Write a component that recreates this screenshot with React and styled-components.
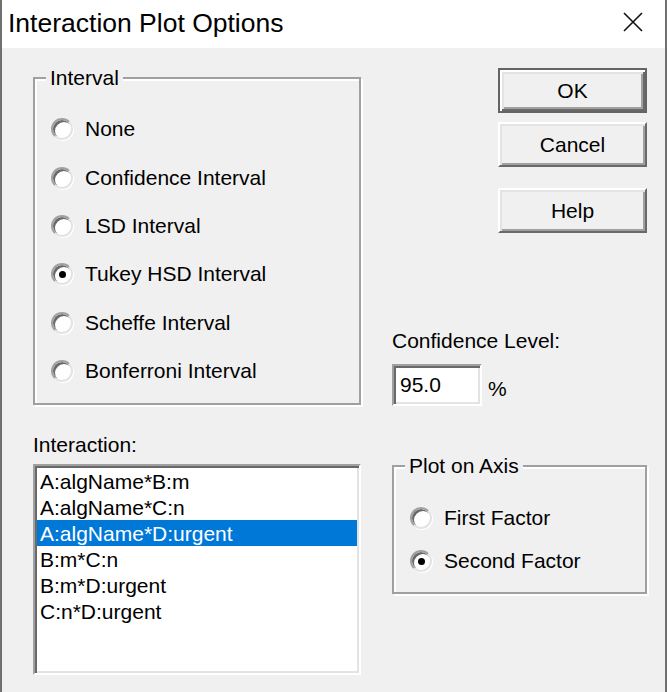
import React from "react";
import styled, { createGlobalStyle } from "styled-components";

const GlobalStyle = createGlobalStyle`
  html, body {
    margin: 0;
    padding: 0;
    background: #f0f0f0;
  }
  body {
    font-family: "Liberation Sans", Arial, sans-serif;
    color: #000;
  }
`;

const Window = styled.div`
  width: 667px;
  height: 692px;
  box-sizing: border-box;
  border-left: 2px solid #707070;
  border-right: 2px solid #707070;
  background: #f0f0f0;
  display: flex;
  flex-direction: column;
  overflow: hidden;
`;

const TitleBar = styled.div`
  height: 48px;
  flex: none;
  background: #fff;
  display: flex;
  align-items: center;
  justify-content: space-between;
  padding: 0 22px 2px 6px;
  box-sizing: border-box;
`;

const Title = styled.div`
  font-size: 26.5px;
  line-height: 30px;
  color: #000;
`;

const CloseIcon = styled.svg`
  width: 20px;
  height: 20px;
  margin-bottom: 2px;
`;

const Body = styled.div`
  display: flex;
  gap: 31px;
  padding: 0 18px 0 31px;
  flex: 1;
`;

const LeftColumn = styled.div`
  width: 328px;
  padding-top: 29px;
  display: flex;
  flex-direction: column;
`;

const RightColumn = styled.div`
  flex: 1;
  padding-top: 20px;
  display: flex;
  flex-direction: column;
`;

const GroupBox = styled.div`
  position: relative;
  box-sizing: border-box;
  height: ${(p) => p.$height}px;
  margin-top: ${(p) => p.$top || 0}px;
  border: 2px solid #a0a0a0;
  box-shadow: 2px 2px 0 #fff, inset 2px 2px 0 #fff;
  padding: ${(p) => p.$padTop}px 0 0 16px;
`;

const Legend = styled.span`
  position: absolute;
  top: -13px;
  left: 11px;
  padding: 0 4px;
  background: #f0f0f0;
  font-size: 21px;
  line-height: 24px;
`;

const RadioRow = styled.label`
  display: flex;
  align-items: center;
  gap: 12px;
  height: ${(p) => p.$h}px;
  font-size: 21px;
  line-height: 24px;
`;

const RadioCircle = styled.span`
  position: relative;
  width: 22px;
  height: 22px;
  box-sizing: border-box;
  border-radius: 50%;
  border: 2px solid;
  border-color: #a0a0a0 #e3e3e3 #e3e3e3 #a0a0a0;
  background: #fff;
  box-shadow: inset 2px 2px 0 #696969, 1px 1px 0 #fff;
  flex: none;

  &::after {
    content: "";
    display: ${(p) => (p.$checked ? "block" : "none")};
    position: absolute;
    left: 50%;
    top: 50%;
    width: 7px;
    height: 7px;
    margin: -3px 0 0 -3px;
    border-radius: 50%;
    background: #000;
  }
`;

const FieldLabel = styled.div`
  font-size: 21px;
  line-height: 24px;
  margin-top: ${(p) => p.$top}px;
`;

const ListBox = styled.div`
  margin-top: 7px;
  height: 211px;
  box-sizing: border-box;
  border: 2px solid;
  border-color: #a0a0a0 #fff #fff #a0a0a0;
  box-shadow: inset 2px 2px 0 #696969, inset -2px -2px 0 #e3e3e3;
  background: #fff;
  padding: 2px;
`;

const ListItem = styled.div`
  height: 26px;
  line-height: 26px;
  font-size: 21px;
  padding: 1px 0 0 3px;
  box-sizing: border-box;
  white-space: nowrap;
  background: ${(p) => (p.$selected ? "#0078d7" : "transparent")};
  color: ${(p) => (p.$selected ? "#fff" : "#000")};
`;

const ButtonStack = styled.div`
  align-self: flex-end;
  width: 149px;
  display: flex;
  flex-direction: column;
`;

const Button = styled.button`
  height: 45px;
  width: 100%;
  margin-top: ${(p) => p.$top || 0}px;
  box-sizing: border-box;
  background: #f0f0f0;
  font-family: "Liberation Sans", Arial, sans-serif;
  font-size: 21px;
  color: #000;
  padding: 0;
  border: 2px solid;
  border-color: ${(p) =>
    p.$default ? "#646464" : "#fff #696969 #696969 #fff"};
  box-shadow: ${(p) =>
    p.$default
      ? "inset 2px 2px 0 #fff, inset -2px -2px 0 #696969, inset 4px 4px 0 #e3e3e3, inset -4px -4px 0 #a0a0a0"
      : "inset 2px 2px 0 #e3e3e3, inset -2px -2px 0 #a0a0a0"};
`;

const InputRow = styled.div`
  display: flex;
  align-items: center;
  gap: 6px;
  margin-top: 11px;
`;

const TextInput = styled.div`
  width: 90px;
  height: 42px;
  box-sizing: border-box;
  border: 2px solid;
  border-color: #a0a0a0 #fff #fff #a0a0a0;
  box-shadow: inset 2px 2px 0 #696969, inset -2px -2px 0 #e3e3e3;
  background: #fff;
  font-size: 21px;
  line-height: 24px;
  padding: 7px 0 0 6px;
`;

const Unit = styled.span`
  font-size: 21px;
  line-height: 24px;
  padding-top: 8px;
`;

const intervals = [
  "None",
  "Confidence Interval",
  "LSD Interval",
  "Tukey HSD Interval",
  "Scheffe Interval",
  "Bonferroni Interval",
];

const interactions = [
  "A:algName*B:m",
  "A:algName*C:n",
  "A:algName*D:urgent",
  "B:m*C:n",
  "B:m*D:urgent",
  "C:n*D:urgent",
];

function Radio({ label, checked, h }) {
  return (
    <RadioRow $h={h}>
      <RadioCircle $checked={checked} />
      {label}
    </RadioRow>
  );
}

export default function App() {
  return (
    <>
      <GlobalStyle />
      <Window>
        <TitleBar>
          <Title>Interaction Plot Options</Title>
          <CloseIcon viewBox="0 0 20 20">
            <path d="M1 1 L19 19 M19 1 L1 19" stroke="#111" strokeWidth="1.6" fill="none" />
          </CloseIcon>
        </TitleBar>
        <Body>
          <LeftColumn>
            <GroupBox $height={328} $padTop={26}>
              <Legend>Interval</Legend>
              {intervals.map((name) => (
                <Radio key={name} label={name} h={48.4} checked={name === "Tukey HSD Interval"} />
              ))}
            </GroupBox>
            <FieldLabel $top={28}>Interaction:</FieldLabel>
            <ListBox>
              {interactions.map((item, i) => (
                <ListItem key={item} $selected={i === 2}>
                  {item}
                </ListItem>
              ))}
            </ListBox>
          </LeftColumn>
          <RightColumn>
            <ButtonStack>
              <Button $default>OK</Button>
              <Button $top={9}>Cancel</Button>
              <Button $top={21}>Help</Button>
            </ButtonStack>
            <FieldLabel $top={96}>Confidence Level:</FieldLabel>
            <InputRow>
              <TextInput>95.0</TextInput>
              <Unit>%</Unit>
            </InputRow>
            <GroupBox $height={129} $top={59} $padTop={29}>
              <Legend>Plot on Axis</Legend>
              <Radio label="First Factor" h={43} />
              <Radio label="Second Factor" h={43} checked />
            </GroupBox>
          </RightColumn>
        </Body>
      </Window>
    </>
  );
}
